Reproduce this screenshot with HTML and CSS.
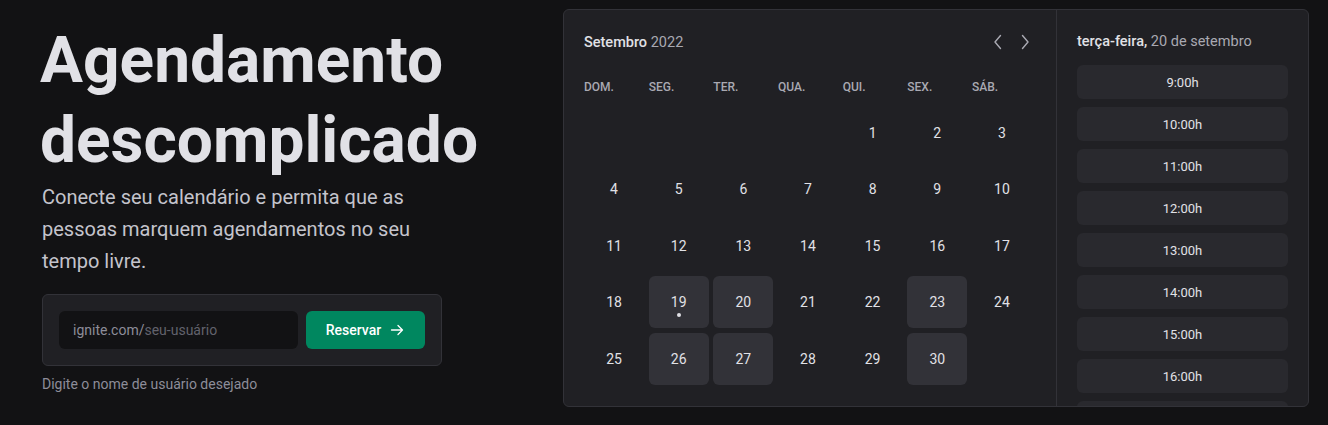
FILE: index.html
```html
<!DOCTYPE html>
<html lang="pt-BR">
<head>
<meta charset="utf-8">
<title>Agendamento descomplicado</title>
<link rel="stylesheet" href="styles.css">
</head>
<body>
<main class="page">
  <section class="hero">
    <h1 class="hero-title">Agendamento descomplicado</h1>
    <p class="hero-text">Conecte seu calendário e permita que as pessoas marquem agendamentos no seu tempo livre.</p>
    <form class="claim">
      <label class="claim-input">
        <span class="prefix">ignite.com/</span>
        <input type="text" placeholder="seu-usuário">
      </label>
      <button type="button" class="claim-btn">Reservar
        <svg width="16" height="16" viewBox="0 0 16 16" fill="none" stroke="currentColor" stroke-width="1.3" stroke-linecap="round" stroke-linejoin="round"><path d="M2.5 8h11M9 3.5 13.5 8 9 12.5"/></svg>
      </button>
    </form>
    <p class="claim-hint">Digite o nome de usuário desejado</p>
  </section>

  <section class="scheduler">
    <div class="calendar">
      <header class="cal-head">
        <h2 class="cal-title">Setembro <span>2022</span></h2>
        <div class="cal-nav">
          <button type="button" class="nav-btn" aria-label="Mês anterior"><svg width="10" height="16" viewBox="0 0 10 16" fill="none" stroke="currentColor" stroke-width="1.4" stroke-linecap="round" stroke-linejoin="round"><path d="M7.5 1.5 2 8l5.5 6.5"/></svg></button>
          <button type="button" class="nav-btn" aria-label="Próximo mês"><svg width="10" height="16" viewBox="0 0 10 16" fill="none" stroke="currentColor" stroke-width="1.4" stroke-linecap="round" stroke-linejoin="round"><path d="M2.5 1.5 8 8l-5.5 6.5"/></svg></button>
        </div>
      </header>
      <div class="cal-grid">
        <div class="wd">DOM.</div><div class="wd">SEG.</div><div class="wd">TER.</div><div class="wd">QUA.</div><div class="wd">QUI.</div><div class="wd">SEX.</div><div class="wd">SÁB.</div>

        <div class="day"></div><div class="day"></div><div class="day"></div><div class="day"></div>
        <div class="day">1</div><div class="day">2</div><div class="day">3</div>

        <div class="day">4</div><div class="day">5</div><div class="day">6</div><div class="day">7</div><div class="day">8</div><div class="day">9</div><div class="day">10</div>

        <div class="day">11</div><div class="day">12</div><div class="day">13</div><div class="day">14</div><div class="day">15</div><div class="day">16</div><div class="day">17</div>

        <div class="day">18</div><div class="day avail today">19</div><div class="day avail">20</div><div class="day">21</div><div class="day">22</div><div class="day avail">23</div><div class="day">24</div>

        <div class="day">25</div><div class="day avail">26</div><div class="day avail">27</div><div class="day">28</div><div class="day">29</div><div class="day avail">30</div><div class="day"></div>
      </div>
    </div>

    <aside class="timepicker">
      <h3 class="tp-title">terça-feira, <span>20 de setembro</span></h3>
      <ul class="tp-list">
        <li class="slot">9:00h</li>
        <li class="slot">10:00h</li>
        <li class="slot">11:00h</li>
        <li class="slot">12:00h</li>
        <li class="slot">13:00h</li>
        <li class="slot">14:00h</li>
        <li class="slot">15:00h</li>
        <li class="slot">16:00h</li>
        <li class="slot slot-next" aria-label="17:00h"></li>
      </ul>
    </aside>
  </section>
</main>
</body>
</html>
```

FILE: styles.css
```css
* { box-sizing: border-box; }

html, body {
  margin: 0;
  padding: 0;
  background: #121214;
  color: #e1e1e6;
  font-family: Roboto, "Liberation Sans", Arial, sans-serif;
  -webkit-font-smoothing: antialiased;
}

.page {
  display: flex;
  align-items: flex-start;
  gap: 41px;
  padding: 9px 0 0 42px;
  height: 425px;
  overflow: hidden;
}

/* Hero */
.hero {
  flex: 0 0 480px;
  padding-top: 12px;
}

.hero-title {
  margin: 0 0 0 -2px;
  font-size: 64px;
  font-weight: 700;
  line-height: 80px;
  color: #e1e1e6;
}

.hero-text {
  margin: 0;
  max-width: 400px;
  font-size: 20px;
  line-height: 32px;
  color: #c4c4cc;
}

.claim {
  margin-top: 17px;
  width: 400px;
  display: flex;
  gap: 8px;
  padding: 16px;
  background: #202024;
  border: 1px solid #323238;
  border-radius: 6px;
}

.claim-input {
  flex: 1 1 0;
  min-width: 0;
  height: 38px;
  display: flex;
  align-items: center;
  padding: 0 14px;
  background: #121214;
  border-radius: 6px;
  font-size: 14px;
  color: #8d8d99;
}

.claim-input input {
  flex: 1 1 0;
  min-width: 0;
  width: 0;
  border: 0;
  padding: 0;
  background: transparent;
  font: inherit;
  color: #e1e1e6;
  outline: none;
}

.claim-input input::placeholder { color: #62626c; }

.claim-btn {
  flex: 0 0 119px;
  height: 38px;
  display: flex;
  align-items: center;
  justify-content: center;
  gap: 8px;
  border: 0;
  border-radius: 6px;
  background: #00875f;
  color: #ffffff;
  font-family: inherit;
  font-size: 14px;
  font-weight: 500;
}

.claim-hint {
  margin: 7px 0 0;
  font-size: 14px;
  line-height: 22px;
  color: #8d8d99;
}

/* Scheduler card */
.scheduler {
  flex: 0 0 746px;
  display: grid;
  grid-template-columns: 492px 1fr;
  background: #202024;
  border: 1px solid #323238;
  border-radius: 6px;
  overflow: hidden;
}

.calendar {
  padding: 20px 20px 21px;
}

.cal-head {
  display: flex;
  align-items: center;
  justify-content: space-between;
  height: 24px;
}

.cal-title {
  margin: 0;
  font-size: 14.5px;
  font-weight: 500;
  color: #e1e1e6;
}

.cal-title span {
  font-weight: 400;
  color: #a9a9b2;
}

.cal-nav {
  display: flex;
  gap: 17px;
  margin-right: 6px;
}

.nav-btn {
  border: 0;
  padding: 0;
  background: transparent;
  color: #a9a9b2;
  display: flex;
}

.cal-grid {
  margin-top: 17px;
  display: grid;
  grid-template-columns: repeat(7, 60px);
  grid-template-rows: 31px repeat(5, 52px);
  column-gap: 4.67px;
  row-gap: 4.6px;
  width: 452px;
}

.wd {
  display: flex;
  align-items: center;
  font-size: 12px;
  font-weight: 500;
  color: #a9a9b2;
}

.day {
  position: relative;
  display: flex;
  align-items: center;
  justify-content: center;
  font-size: 14px;
  font-weight: 400;
  color: #e1e1e6;
  border-radius: 6px;
}

.day.avail { background: #323238; }

.day.today::after {
  content: "";
  position: absolute;
  left: 50%;
  top: 37px;
  width: 4px;
  height: 4px;
  margin-left: -2px;
  border-radius: 50%;
  background: #e1e1e6;
}

/* Time picker */
.timepicker {
  contain: size;
  overflow: hidden;
  border-left: 1px solid #323238;
  padding: 20px 20px 0;
}

.tp-title {
  margin: 0;
  height: 24px;
  line-height: 24px;
  font-size: 14.5px;
  font-weight: 500;
  color: #e1e1e6;
}

.tp-title span {
  font-weight: 400;
  color: #a9a9b2;
}

.tp-list {
  list-style: none;
  margin: 11px 0 0;
  padding: 0;
  display: flex;
  flex-direction: column;
  gap: 8px;
}

.slot {
  flex: 0 0 34px;
  height: 34px;
  display: flex;
  align-items: center;
  justify-content: center;
  background: #29292e;
  border-radius: 6px;
  font-size: 13px;
  color: #e1e1e6;
}
```
